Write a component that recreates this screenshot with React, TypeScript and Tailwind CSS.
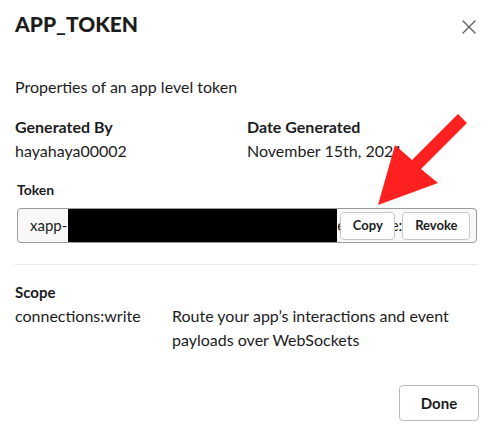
import { X } from "lucide-react";

const font = { fontFamily: "Lato, 'Noto Sans', sans-serif" };

function Arrow() {
  // red annotation arrow pointing at the Copy button
  return (
    <svg className="pointer-events-none absolute left-0 top-0" width="493" height="438" viewBox="0 0 493 438">
      <polygon
        points="458,114 467,123 421,169 438,183 378,205 395,145 412,160"
        fill="#fd2020"
      />
    </svg>
  );
}

export default function App() {
  return (
    <div className="relative h-[438px] w-[493px] overflow-hidden bg-white text-[#1d1c1d]" style={font}>
      <div className="flex items-start justify-between pl-[15px] pr-[12px] pt-[9px]">
        <h1 className="text-[21px] font-black leading-[30px]">APP_TOKEN</h1>
        <X className="mt-[6px] h-[24px] w-[24px] text-[#616061]" strokeWidth={1.4} />
      </div>

      <p className="mt-[37px] pl-[15px] text-[16px] leading-[22px]">Properties of an app level token</p>

      <div className="mt-[17px] grid grid-cols-[232px_1fr] pl-[15px] text-[16px] leading-[24px]">
        <div>
          <div className="font-bold">Generated By</div>
          <div>hayahaya00002</div>
        </div>
        <div>
          <div className="font-bold">Date Generated</div>
          <div>November 15th, 2021</div>
        </div>
      </div>

      <div className="mt-[17px] pl-[17px] text-[14px] font-bold leading-[20px]">Token</div>

      <div className="ml-[17px] mt-[8px] flex h-[35px] w-[460px] items-center overflow-hidden rounded-[4px] border border-[#9b9b9b] bg-[#f8f8f8] text-[15px]">
        <span className="pl-[12px] pr-[1px] text-[#1d1c1d]">xapp-</span>
        <div className="h-full w-[269px] shrink-0 bg-black" />
        <span className="w-[3px] shrink-0 overflow-hidden whitespace-nowrap">e</span>
        <button className="h-[28px] w-[55px] shrink-0 rounded-[4px] border border-[#c8c8c8] bg-white text-[13px] font-bold">
          Copy
        </button>
        <span className="flex w-[7px] shrink-0 justify-end overflow-hidden whitespace-nowrap">e:</span>
        <button className="h-[28px] w-[68px] shrink-0 rounded-[4px] border border-[#c8c8c8] bg-white text-[13px] font-bold">
          Revoke
        </button>
      </div>

      <div className="mx-[15px] mt-[21px] h-px bg-[#e8e8e8]" />

      <div className="mt-[16px] pl-[15px] text-[15px] font-bold leading-[23px]">Scope</div>
      <div className="flex pl-[15px] text-[16px] leading-[24px]">
        <div className="w-[157px] shrink-0">connections:write</div>
        <div className="w-[306px]">Route your app’s interactions and event payloads over WebSockets</div>
      </div>

      <div className="mt-[33px] flex justify-end pr-[14px]">
        <button className="h-[36px] w-[80px] rounded-[4px] border border-[#bcbcbc] bg-white text-[15px] font-bold">
          Done
        </button>
      </div>

      <Arrow />
    </div>
  );
}
